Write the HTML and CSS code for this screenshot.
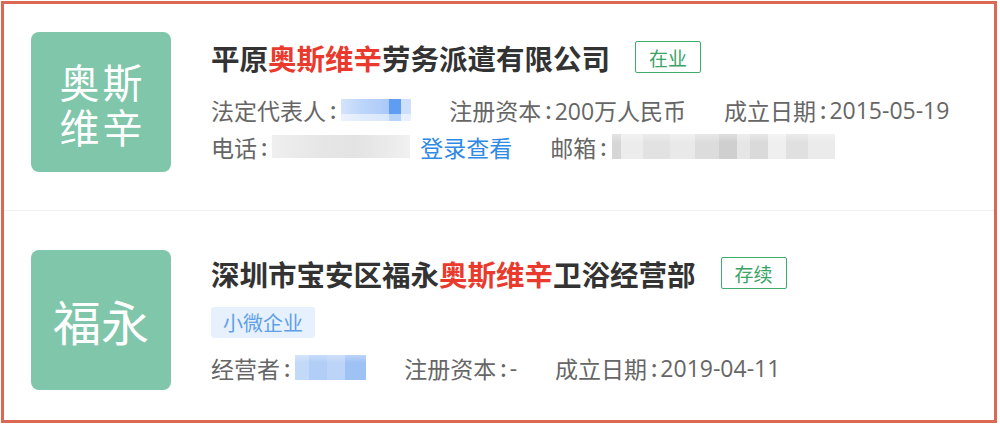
FILE: index.html
```html
<!DOCTYPE html>
<html lang="zh-CN">
<head>
    <meta charset="UTF-8">
    <meta name="viewport" content="width=device-width, initial-scale=1.0">
    <title>企业搜索结果</title>
    <link rel="stylesheet" href="styles.css">
</head>
<body>
    <div class="panel">
        <div class="row first">
            <div class="logo logo-four"><span>奥斯</span><span>维辛</span></div>
            <div class="info">
                <div class="title-line">
                    <h3 class="name">平原<em>奥斯维辛</em>劳务派遣有限公司</h3>
                    <span class="status">在业</span>
                </div>
                <div class="meta">
                    <span class="item">法定代表人<span class="colon">:</span><i class="blur blur-blue"></i></span>
                    <span class="item">注册资本<span class="colon">:</span>200万人民币</span>
                    <span class="item">成立日期<span class="colon">:</span>2015-05-19</span>
                </div>
                <div class="meta">
                    <span class="item">电话<span class="colon">:</span><i class="blur blur-phone"></i><a class="login" href="#">登录查看</a></span>
                    <span class="item">邮箱<span class="colon">:</span><i class="blur blur-mail"></i></span>
                </div>
            </div>
        </div>
        <div class="row second">
            <div class="logo logo-two">福永</div>
            <div class="info">
                <div class="title-line">
                    <h3 class="name">深圳市宝安区福永<em>奥斯维辛</em>卫浴经营部</h3>
                    <span class="status">存续</span>
                </div>
                <div class="tags">
                    <span class="tag">小微企业</span>
                </div>
                <div class="meta">
                    <span class="item">经营者<span class="colon">:</span><i class="blur blur-owner"></i></span>
                    <span class="item">注册资本<span class="colon">:</span>-</span>
                    <span class="item">成立日期<span class="colon">:</span>2019-04-11</span>
                </div>
            </div>
        </div>
    </div>
</body>
</html>
```

FILE: styles.css
```css
body {
    margin: 0;
    background-color: #fff;
    font-family: "Noto Sans CJK SC", "Noto Sans", sans-serif;
}
.panel {
    margin: 1px 0 0 1px;
    width: 996px;
    height: 422px;
    box-sizing: border-box;
    border: 3px solid #db6853;
}
.row {
    display: flex;
    padding-left: 27px;
}
.row.first {
    padding-top: 28px;
    box-sizing: border-box;
    height: 207px;
    border-bottom: 1px solid #f0f0f0;
}
.row.second {
    padding-top: 39px;
}
.logo {
    width: 140px;
    height: 140px;
    flex-shrink: 0;
    border-radius: 8px;
    background-color: #7fc6ab;
    color: #fff;
    display: flex;
    align-items: center;
    justify-content: center;
    text-align: center;
}
.logo-four {
    flex-direction: column;
    gap: 2px;
    font-size: 40px;
    letter-spacing: 3px;
    padding: 4px 0 0 3px;
    box-sizing: border-box;
}
.logo-four span {
    line-height: 43px;
}
.logo-two {
    font-size: 48px;
}
.info {
    margin-left: 40px;
}
.first .info {
    padding-top: 5px;
}
.second .info {
    padding-top: 3px;
}
.title-line {
    display: flex;
    align-items: center;
    height: 40px;
}
.name {
    margin: 0;
    font-size: 28.5px;
    font-weight: 700;
    color: #333;
}
.name em {
    font-style: normal;
    color: #e93a2d;
}
.status {
    margin-left: 25px;
    width: 66px;
    height: 32px;
    box-sizing: border-box;
    border: 1px solid #3eac6b;
    border-radius: 2px;
    color: #3aa366;
    font-size: 19px;
    display: flex;
    align-items: center;
    justify-content: center;
}
.meta {
    display: flex;
    align-items: center;
    gap: 38px;
    height: 37px;
    font-family: "Open Sans", "Noto Sans CJK SC", sans-serif;
    font-size: 23px;
    color: #666;
}
.title-line + .meta {
    margin-top: 14px;
}
.colon {
    padding: 0 3px 0 4px;
    font-weight: 600;
}
.tags {
    margin-top: 14px;
    display: flex;
}
.tag {
    height: 31px;
    padding: 0 12px;
    border-radius: 3px;
    background-color: #e7f1fd;
    color: #5f9fe6;
    font-size: 20px;
    display: flex;
    align-items: center;
}
.tags + .meta {
    margin-top: 11px;
}
.item {
    display: flex;
    align-items: center;
}
.blur {
    display: inline-block;
    margin-left: 2px;
}
.blur-blue {
    width: 70px;
    height: 22px;
    background:
        linear-gradient(to bottom, transparent 70%, rgba(255, 255, 255, 0.55) 70%),
        linear-gradient(to right, #d4e4fb 0%, #bcd5fa 30%, #b2cef9 55%, #a9c8f8 68%, #5e9df1 68%, #5e9df1 86%, #cddffb 86%);
}
.blur-phone {
    width: 138px;
    height: 23px;
    background: linear-gradient(to right, #efefef 0%, #e6e6e6 35%, #e3e3e3 60%, #ebebeb 85%, #f1f1f1 100%);
}
.login {
    margin-left: 10px;
    color: #2f8ae5;
    text-decoration: none;
}
.blur-mail {
    width: 223px;
    height: 25px;
    background:
        linear-gradient(to bottom, rgba(255, 255, 255, 0.35) 0%, transparent 35%),
        linear-gradient(to right, #d6d6d6 0%, #d6d6d6 4%, #ececec 4%, #ececec 14%, #e2e2e2 14%, #e2e2e2 26%, #e9e9e9 26%, #e9e9e9 37%, #dcdcdc 37%, #dcdcdc 48%, #cfcfcf 48%, #cfcfcf 56%, #e6e6e6 56%, #e6e6e6 62%, #dadada 62%, #dadada 70%, #efefef 70%, #efefef 78%, #e0e0e0 78%, #e0e0e0 88%, #ebebeb 88%, #ebebeb 100%);
}
.blur-owner {
    width: 71px;
    height: 25px;
    background:
        linear-gradient(to bottom, rgba(255, 255, 255, 0.3) 0%, transparent 30%),
        linear-gradient(to right, #c3d9f8 0%, #c3d9f8 20%, #b2cef7 20%, #b2cef7 45%, #bcd4f8 45%, #bcd4f8 70%, #9fc2f5 70%, #9fc2f5 100%);
}
```
